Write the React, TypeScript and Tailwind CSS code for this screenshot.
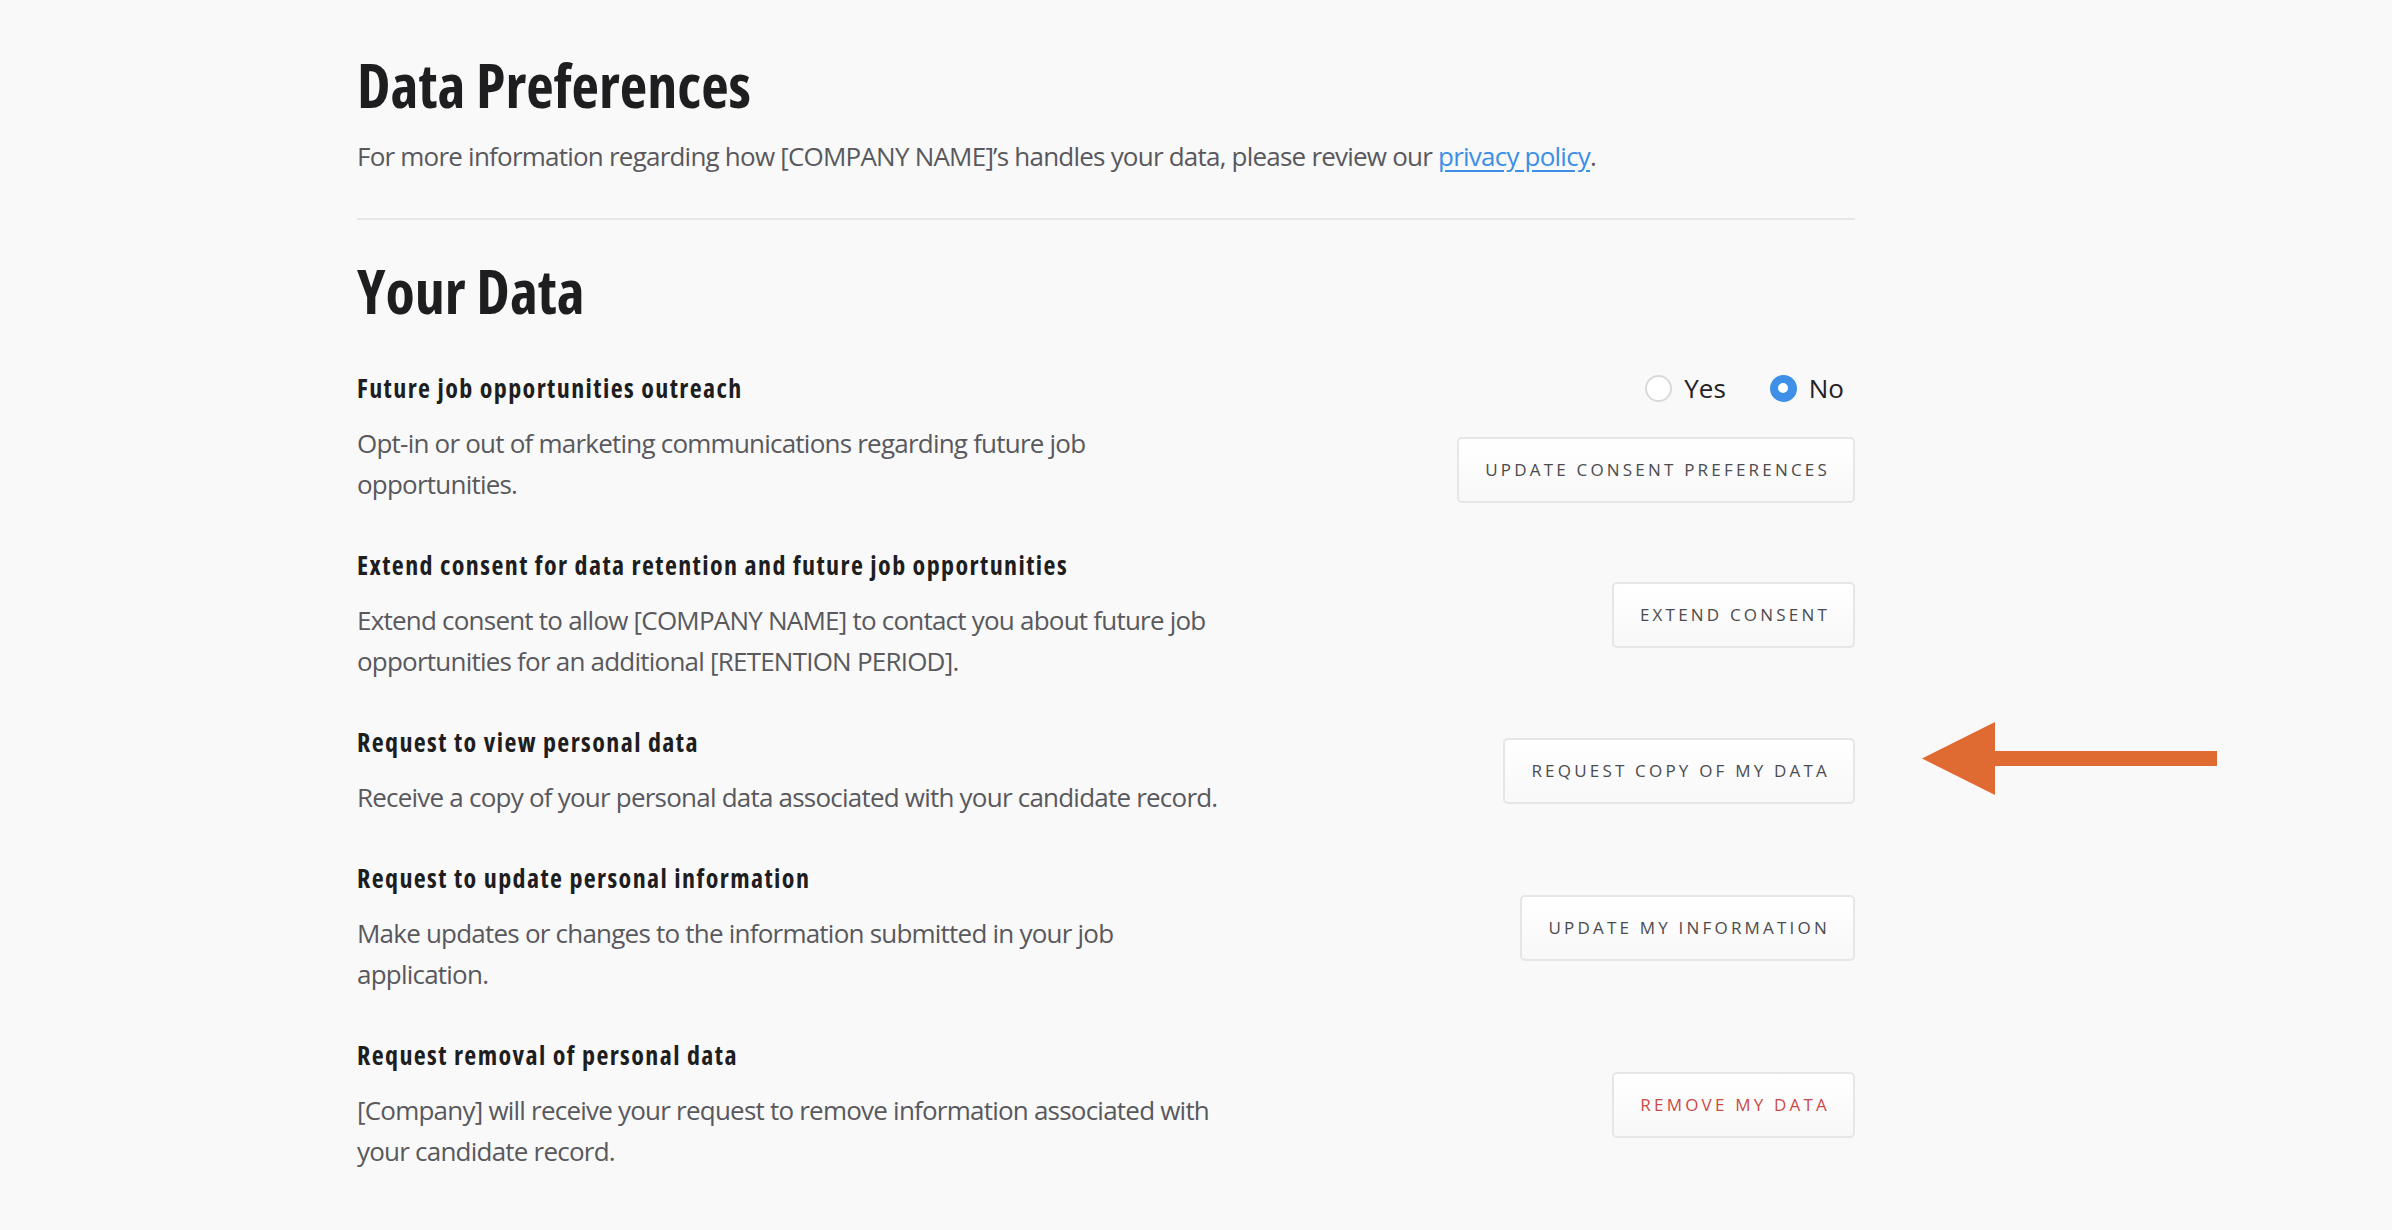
const rows = [
  {
    title: "Extend consent for data retention and future job opportunities",
    text: "Extend consent to allow [COMPANY NAME] to contact you about future job opportunities for an additional [RETENTION PERIOD].",
    action: "Extend consent",
  },
  {
    title: "Request to view personal data",
    text: "Receive a copy of your personal data associated with your candidate record.",
    action: "Request copy of my data",
  },
  {
    title: "Request to update personal information",
    text: "Make updates or changes to the information submitted in your job application.",
    action: "Update my information",
  },
  {
    title: "Request removal of personal data",
    text: "[Company] will receive your request to remove information associated with your candidate record.",
    action: "Remove my data",
    danger: true,
  },
];

function ActionButton({ label, danger }: { label: string; danger?: boolean }) {
  return (
    <button
      type="button"
      className={`flex h-[66px] shrink-0 items-center rounded-[5px] border-2 border-[#e6e6e6] bg-linear-to-b from-white to-[#f8f8f8] pl-[26px] pr-[23px] text-[17px] uppercase tracking-[3.2px] ${
        danger ? "text-[#cc4a45]" : "text-[#4b4b4e]"
      }`}
    >
      {label}
    </button>
  );
}

function Radio({ label, checked }: { label: string; checked?: boolean }) {
  return (
    <label className="flex items-center gap-[12px]">
      {checked ? (
        <span className="flex h-[27px] w-[27px] items-center justify-center rounded-full bg-[#3d8fe8]">
          <span className="h-[10px] w-[10px] rounded-full bg-white" />
        </span>
      ) : (
        <span className="h-[27px] w-[27px] rounded-full border-2 border-[#d9d9d9] bg-white" />
      )}
      <span className="text-[26px] leading-[36px] text-[#222225]">{label}</span>
    </label>
  );
}

function RowText({ title, text }: { title: string; text: string }) {
  return (
    <div className="max-w-[878px]">
      <h3 className="text-[26px] font-bold leading-[36px] tracking-[1.4px] text-[#1e1e21] font-stretch-[83%]">
        {title}
      </h3>
      <p className="mt-[17px] text-[26px] leading-[41px] tracking-[-0.78px] text-[#58585d] font-stretch-[94%]">{text}</p>
    </div>
  );
}

export default function App() {
  return (
    <div className="relative min-h-[1230px] bg-[#f9f9f9] font-['Open_Sans',sans-serif]">
      <div className="ml-[357px] w-[1498px] pt-[49px]">
        <h1 className="text-[60px] font-bold leading-[72px] text-[#1e1e21] font-stretch-condensed">Data Preferences</h1>
        <p className="mt-[15px] text-[26px] leading-[41px] tracking-[-0.78px] text-[#58585d] font-stretch-[94%]">
          For more information regarding how [COMPANY NAME]’s handles your data, please review our{" "}
          <a href="#" className="text-[#3b8fe6] underline underline-offset-[4px]">
            privacy policy
          </a>
          .
        </p>
        <hr className="mt-[41px] border-t-2 border-[#e7e7e7]" />

        <h2 className="mt-[35px] text-[60px] font-bold leading-[72px] text-[#1e1e21] font-stretch-condensed">Your Data</h2>

        <div className="mt-[43px] flex flex-col gap-[42px]">
          <div className="flex items-start justify-between">
            <RowText
              title="Future job opportunities outreach"
              text="Opt-in or out of marketing communications regarding future job opportunities."
            />
            <div className="flex flex-col items-end">
              <div className="flex items-center gap-[44px] pr-[11px]">
                <Radio label="Yes" />
                <Radio label="No" checked />
              </div>
              <div className="mt-[31px]">
                <ActionButton label="Update consent preferences" />
              </div>
            </div>
          </div>
          {rows.map((r) => (
            <div key={r.title} className="flex items-center justify-between">
              <RowText title={r.title} text={r.text} />
              <ActionButton label={r.action} danger={r.danger} />
            </div>
          ))}
        </div>
      </div>

      <svg className="absolute left-[1915px] top-[715px]" width="310" height="90" viewBox="0 0 310 90">
        <polygon points="7,43.5 80,7 80,36 302,36 302,51 80,51 80,80" fill="#e06b32" />
      </svg>
    </div>
  );
}
